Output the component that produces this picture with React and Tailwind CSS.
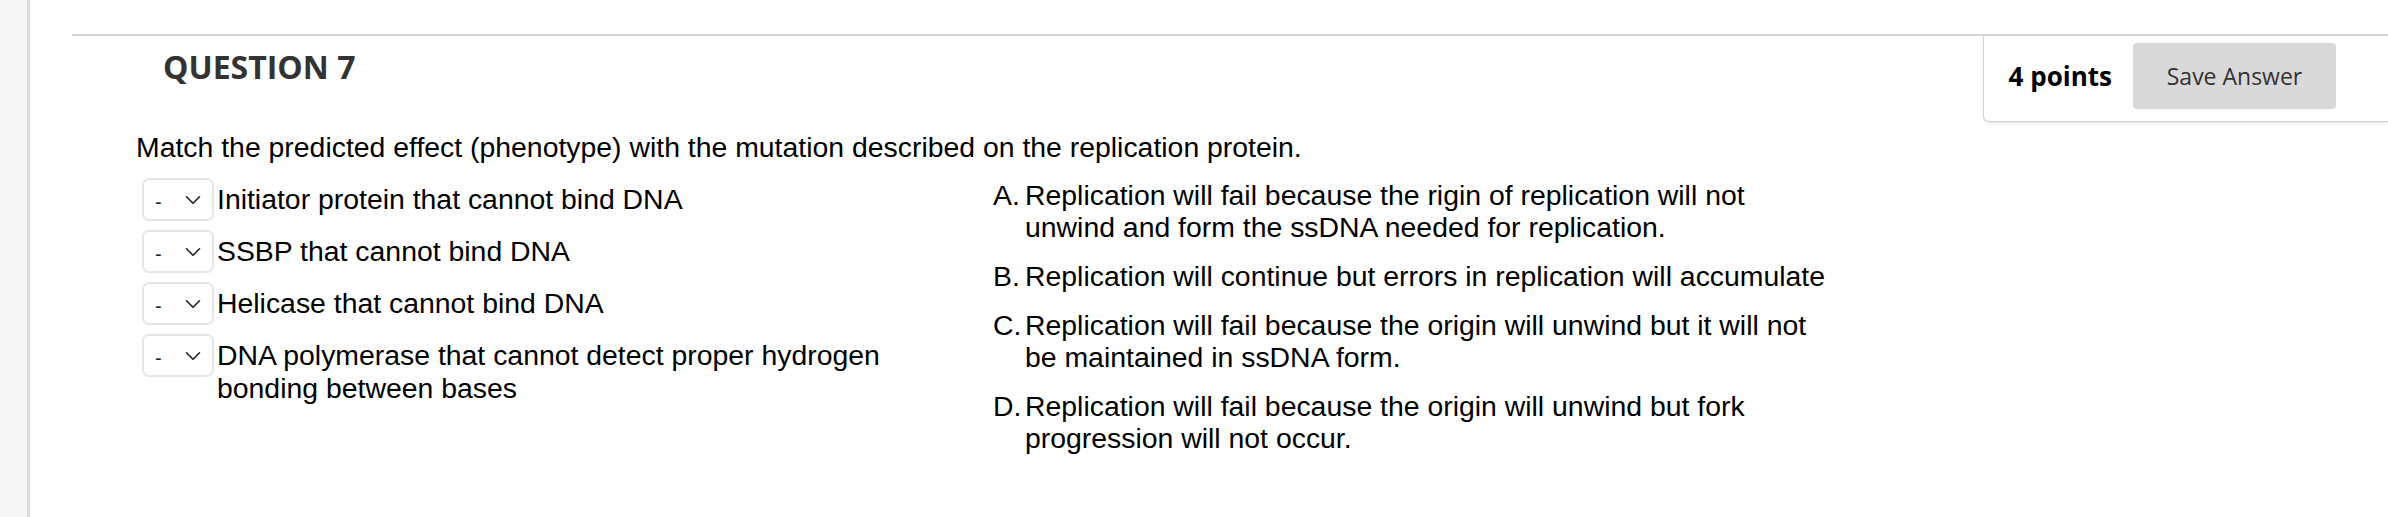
import { ChevronDown } from "lucide-react";

const prompts = [
  "Initiator protein that cannot bind DNA",
  "SSBP that cannot bind DNA",
  "Helicase that cannot bind DNA",
  "DNA polymerase that cannot detect proper hydrogen bonding between bases",
];

const answers = [
  { key: "A", text: "Replication will fail because the rigin of replication will not unwind and form the ssDNA needed for replication." },
  { key: "B", text: "Replication will continue but errors in replication will accumulate" },
  { key: "C", text: "Replication will fail because the origin will unwind but it will not be maintained in ssDNA form." },
  { key: "D", text: "Replication will fail because the origin will unwind but fork progression will not occur." },
];

function MatchSelect() {
  return (
    <div className="w-[72px] h-[43px] flex-shrink-0 flex items-center justify-between pl-[11px] pr-[6px] border-2 border-[#e6e6e6] rounded-[7px] bg-white">
      <span className="text-[20px] leading-none text-[#222] mt-[4px]">-</span>
      <ChevronDown size={26} strokeWidth={1.5} className="text-[#222]" />
    </div>
  );
}

export default function App() {
  return (
    <div className="flex min-h-[517px] bg-white font-['Liberation_Sans',Arial,sans-serif]">
      {/* left rail */}
      <div className="w-[30px] flex-shrink-0 bg-[#f7f7f7] border-r-[3px] border-[#dcdcdc]"></div>

      <div className="flex-1 ml-[42px] mt-[34px]">
        <div className="border-t-2 border-[#d6d6d6]">
          {/* header */}
          <div className="flex items-start justify-between">
            <h2 className="mt-[15px] pl-[91px] font-['Open_Sans',sans-serif] font-bold text-[32px] leading-[32px] text-[#333]">
              QUESTION 7
            </h2>
            <div className="flex items-center pt-[7px] pb-[12px] pl-[25px] pr-[52px] border-l border-b border-[#d2d2d2] rounded-bl-[6px] shadow-[0_2px_3px_rgba(0,0,0,0.07)] font-['Open_Sans',sans-serif]">
              <span className="text-[26px] font-bold text-black mr-[21px]">4 points</span>
              <button className="w-[203px] h-[66px] bg-[#d9d9d9] rounded-[4px] text-[23px] text-[#333]">
                Save Answer
              </button>
            </div>
          </div>

          {/* body */}
          <div className="mt-[9px] pl-[64px] text-black text-[28.4px] leading-[32px]">
            <p>Match the predicted effect (phenotype) with the mutation described on the replication protein.</p>

            <div className="flex mt-[15px]">
              <div className="w-[857px] pl-[6px] flex flex-col gap-[9px]">
                {prompts.map((p, i) => (
                  <div key={i} className="flex items-start">
                    <MatchSelect />
                    <p className="ml-[3px] pt-[5px] max-w-[700px] leading-[33px]">{p}</p>
                  </div>
                ))}
              </div>

              <div className="w-[840px] flex flex-col gap-[17px] pt-[1px]">
                {answers.map((a) => (
                  <div key={a.key} className="flex">
                    <span className="w-[32px] flex-shrink-0">{a.key}.</span>
                    <p className="w-[804px]">{a.text}</p>
                  </div>
                ))}
              </div>
            </div>
          </div>
        </div>
      </div>
    </div>
  );
}
